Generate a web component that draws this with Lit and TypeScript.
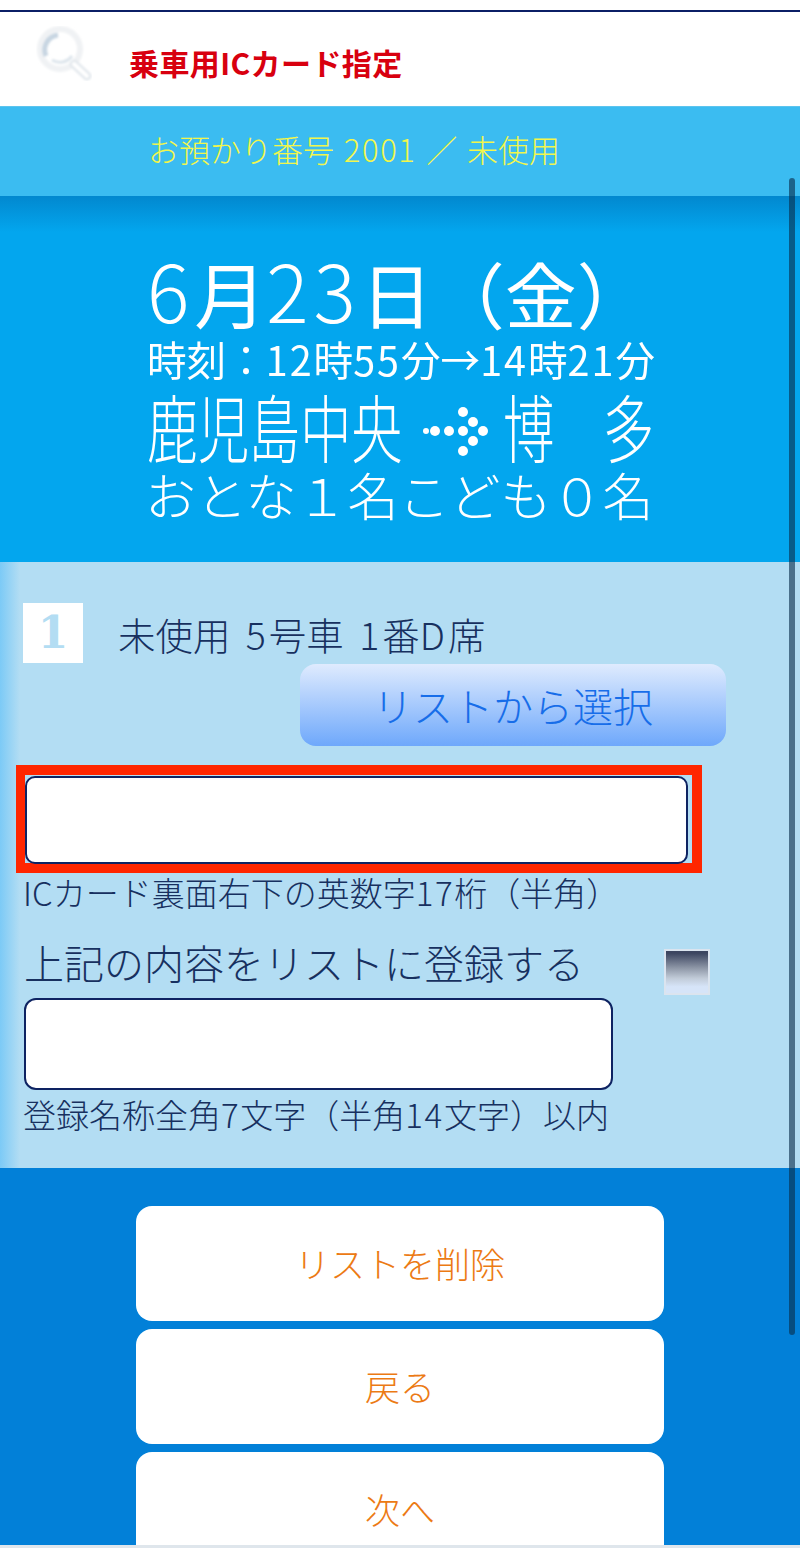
import { LitElement, css, html, svg } from "lit";
import { customElement } from "lit/decorators.js";

@customElement("app-root")
export class AppRoot extends LitElement {
  private searchIcon() {
    return html`<svg class="search" width="60" height="60" viewBox="0 0 60 60">
      <defs><filter id="soft"><feGaussianBlur stdDeviation="1.2"></feGaussianBlur></filter></defs>
      <g fill="none" filter="url(#soft)">
        <circle cx="24" cy="23" r="20" stroke="#f0f2f4" stroke-width="6"></circle>
        <path d="M38 38 L51 50" stroke="#e3e8ed" stroke-width="9" stroke-linecap="round"></path>
        <path d="M38 38 L51 50" stroke="#fff" stroke-width="4" stroke-linecap="round"></path>
        <path d="M10 30 A15 15 0 0 1 22 9" stroke="#c8d6e2" stroke-width="5"></path>
        <path d="M16 34 A15 15 0 0 0 36 30" stroke="#dde5ec" stroke-width="3"></path>
      </g>
    </svg>`;
  }

  private dotsArrow() {
    const dots = [[12, 24], [26, 24], [40, 24], [60, 24], [40, 5], [50, 15], [50, 34], [40, 44]];
    return html`<svg class="arrow" width="66" height="50" viewBox="0 0 66 50">
      <circle cx="3" cy="24" r="3" fill="#fff"></circle>
      ${dots.map(([x, y]) => svg`<circle cx=${x} cy=${y} r="5" fill="#fff"></circle>`)}
    </svg>`;
  }

  protected render(): unknown {
    return html`
      <div class="page">
        <header class="top">
          ${this.searchIcon()}
          <h1>乗車用ICカード指定</h1>
        </header>
        <div class="reserve">お預かり番号 <span class="n">2001</span> ／ 未使用</div>
        <section class="hero">
          <div class="date"><span class="n">6</span>月<span class="n">23</span>日（金）</div>
          <div class="time">時刻：<span class="n">12</span>時<span class="n">55</span>分→<span class="n">14</span>時<span class="n">21</span>分</div>
          <div class="route">
            <span class="from">鹿児島中央</span>
            ${this.dotsArrow()}
            <span class="to">博</span>
            <span class="to last">多</span>
          </div>
          <div class="people">おとな１名こども０名</div>
        </section>
        <section class="panel">
          <div class="seat">
            <span class="num">1</span>
            <span class="seat-text">未使用 <span class="n">5</span>号車 <span class="n">1</span>番<span class="n">D</span>席</span>
          </div>
          <div class="pick-row"><button class="pick">リストから選択</button></div>
          <div class="error"><div class="field"></div></div>
          <p class="note first">ICカード裏面右下の英数字<span class="n">17</span>桁（半角）</p>
          <div class="register">
            <span class="register-text">上記の内容をリストに登録する</span>
            <span class="check"></span>
          </div>
          <div class="field name"></div>
          <p class="note">登録名称全角<span class="n">7</span>文字（半角<span class="n">14</span>文字）以内</p>
        </section>
        <footer class="actions">
          <button class="action">リストを削除</button>
          <button class="action">戻る</button>
          <button class="action">次へ</button>
        </footer>
        <div class="edge"></div>
        <div class="scrollbar"></div>
      </div>
    `;
  }

  static styles = css`
    :host {
      display: block;
      font-family: "Noto Sans CJK JP", "Noto Sans", sans-serif;
    }
    .page {
      position: relative;
      height: 1548px;
      overflow: hidden;
      background: #fff;
    }
    .top {
      box-sizing: border-box;
      height: 96px;
      margin-top: 10px;
      border-top: 2px solid #0b1f66;
      display: flex;
      align-items: flex-start;
    }
    .search {
      margin: 14px 0 0 36px;
      flex: none;
    }
    h1 {
      margin: 30px 0 0 33px;
      font-size: 30px;
      line-height: 40px;
      font-weight: 700;
      color: #d8000f;
      letter-spacing: 0.4px;
    }
    .n {
      letter-spacing: 0.05em;
    }
    .reserve {
      height: 90px;
      background: #3bbcf1;
      border-top: 1px solid #5cc4ee;
      box-sizing: border-box;
      padding: 20px 0 0 148px;
      font-size: 31px;
      line-height: 44px;
      font-weight: 300;
      word-spacing: 3px;
      color: #f2f64c;
    }
    .hero {
      box-sizing: border-box;
      height: 366px;
      padding: 49px 0 0 147px;
      background: linear-gradient(#0288cf 0, #03a6ee 36px);
      color: #fff;
      font-weight: 400;
    }
    .date {
      height: 91px;
      font-size: 72px;
      line-height: 88px;
      white-space: nowrap;
    }
    .date .n {
      font-size: 79px;
      font-weight: 300;
      letter-spacing: 5px;
    }
    .time {
      font-size: 41px;
      line-height: 44px;
      white-space: nowrap;
      transform: scaleX(0.965);
      transform-origin: left;
    }
    .route {
      display: flex;
      align-items: center;
      height: 80px;
      margin-top: 6px;
      font-size: 74px;
      font-weight: 300;
    }
    .from {
      flex: none;
      margin: -4px -94px 0 0;
      white-space: nowrap;
      transform: scaleX(0.69);
      transform-origin: left;
    }
    .arrow {
      flex: none;
      margin-top: 11px;
    }
    .to {
      flex: none;
      margin: -4px 0 0 14px;
      transform: scaleX(0.69);
      transform-origin: left;
    }
    .to.last {
      margin-left: 26px;
    }
    .people {
      font-size: 51px;
      line-height: 56px;
      white-space: nowrap;
      font-weight: 300;
      margin-left: -2px;
    }
    .panel {
      box-sizing: border-box;
      height: 606px;
      padding: 41px 0 0 24px;
      background: linear-gradient(90deg, #7ccaf6 0, #b3ddf3 20px);
      color: #17305f;
    }
    .seat {
      display: flex;
      align-items: center;
      height: 60px;
      margin-left: -1px;
    }
    .num {
      width: 60px;
      height: 60px;
      flex: none;
      background: #fff;
      color: #b3ddf3;
      font: 700 44px/60px "DejaVu Serif", serif;
      text-align: center;
    }
    .seat-text {
      margin-left: 35px;
      font-size: 37.5px;
      font-weight: 300;
      word-spacing: 7px;
      white-space: nowrap;
    }
    .seat-text .n {
      letter-spacing: 3px;
    }
    .pick-row {
      padding-left: 276px;
      margin-top: 1px;
    }
    .pick {
      display: block;
      width: 426px;
      height: 82px;
      border: 0;
      border-radius: 16px;
      background: linear-gradient(#dfebfe, #6ea8fb);
      color: #176de9;
      font-family: inherit;
      font-size: 40px;
      font-weight: 300;
    }
    .error {
      box-sizing: border-box;
      width: 686px;
      height: 108px;
      margin: 19px 0 0 -8px;
      border: 10px solid #ff2600;
      border-left-width: 9px;
      padding-right: 4px;
    }
    .field {
      box-sizing: border-box;
      height: 88px;
      margin-top: 1px;
      background: #fff;
      border: 2px solid #0e2362;
      border-radius: 10px;
    }
    .note {
      margin: 0 0 0 -1px;
      font-size: 33px;
      line-height: 42px;
      font-weight: 300;
      white-space: nowrap;
    }
    .note.first {
      margin-top: -2px;
    }
    .register {
      display: flex;
      align-items: flex-start;
      margin-top: 24px;
      height: 61px;
      font-size: 40px;
      line-height: 50px;
      font-weight: 300;
      white-space: nowrap;
    }
    .register-text {
      flex: none;
      width: 640px;
    }
    .check {
      box-sizing: border-box;
      width: 46px;
      height: 46px;
      margin-top: 12px;
      border: 2px solid #dbe4ef;
      background: linear-gradient(#3c4560 5%, #8d96a6 40%, #c1cbd8 65%, #d6e4f8 85%);
    }
    .field.name {
      width: 589px;
      height: 92px;
      margin: 0 0 3px;
      border-radius: 12px;
    }
    .actions {
      box-sizing: border-box;
      height: 377px;
      padding-top: 38px;
      overflow: hidden;
      background: #0280d8;
      display: flex;
      flex-direction: column;
      align-items: center;
      gap: 8px;
    }
    .action {
      flex: none;
      width: 528px;
      height: 115px;
      border: 0;
      border-radius: 16px;
      padding: 0 0 3px;
      background: #fff;
      color: #ec7a14;
      font-family: inherit;
      font-size: 35px;
      font-weight: 300;
    }
    .edge {
      height: 3px;
      background: #dfe6ec;
    }
    .scrollbar {
      position: absolute;
      top: 178px;
      left: 789px;
      width: 6px;
      height: 1157px;
      border-radius: 3px;
      background: rgba(10, 45, 75, 0.62);
    }
  `;
}
